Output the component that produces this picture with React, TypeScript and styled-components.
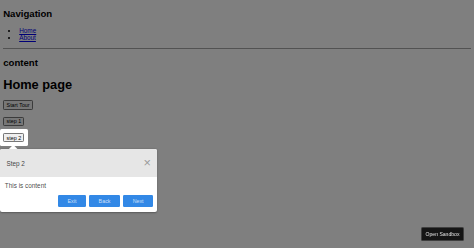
import {ReactElement} from "react";
import styled, {createGlobalStyle} from "styled-components";

// Global
const GlobalStyle = createGlobalStyle`
  html, body {
    margin: 0;
    height: 100%;
    overflow: hidden;
  }

  body {
    background: #fff;
    font-family: "Liberation Sans", Arial, sans-serif;
  }
`

// Page
const Page = styled.div`
  display: flow-root;
  position: relative;
  padding: 0 3.2px;
  min-height: 248px;
  box-sizing: border-box;
`

const SectionTitle = styled.h2`
  margin: 8px 0;
  font-size: 9.6px;
  font-weight: bold;
  line-height: normal;
`

const PageTitle = styled.h1`
  margin: 8.6px 0;
  font-size: 12.8px;
  font-weight: bold;
  line-height: normal;
`

const NavList = styled.ul`
  margin: 6.4px 0;
  padding-left: 16px;
  font-size: 6.4px;
  line-height: 7.4px;
`

const NavLink = styled.a`
  color: #0000ee;
  text-decoration: underline;
`

const Divider = styled.hr`
  margin: 3.2px 0;
  border: 0;
  border-top: 1px solid #a4a4a4;
`

const TourButtons = styled.div`
  display: flex;
  flex-direction: column;
  align-items: flex-start;
  gap: 6.6px;
`

const PlainButton = styled.button`
  margin: 0;
  padding: 0.8px 2.4px;
  font-family: "Liberation Sans", Arial, sans-serif;
  font-size: 5.33px;
  line-height: normal;
  color: #000;
  background: #efefef;
  border: 1px solid #767676;
  border-radius: 1.2px;
`

// Tour
const Target = styled.div`
  position: relative;
  display: inline-flex;
`

const Spotlight = styled.div`
  position: absolute;
  inset: -3.6px -3.2px -3.2px -3.2px;
  border-radius: 1.6px;
  box-shadow: 0 0 0 2000px rgba(0, 0, 0, 0.5);
  pointer-events: none;
  z-index: 5;
`

const Popover = styled.div`
  position: absolute;
  top: calc(100% + 6.8px);
  left: -3.2px;
  width: 157.4px;
  background: #fff;
  border-radius: 2px;
  box-shadow: 0 0.4px 1.8px rgba(0, 0, 0, 0.3);
  z-index: 10;
`

const Arrow = styled.div`
  position: absolute;
  top: -3.2px;
  left: 10.2px;
  width: 6.4px;
  height: 6.4px;
  background: #fff;
  transform: rotate(45deg);
`

const PopoverHeader = styled.div`
  position: relative;
  display: flex;
  align-items: center;
  height: 27.7px;
  padding: 0 6.4px;
  background: #e6e6e6;
  border-radius: 2px 2px 0 0;
`

const PopoverTitle = styled.h3`
  flex: 1 0 auto;
  margin: 0;
  font-size: 6.4px;
  font-weight: 400;
  color: rgba(0, 0, 0, 0.75);
`

const CloseButton = styled.button`
  margin: 0;
  padding: 0;
  background: transparent;
  border: 0;
  font-family: "Liberation Sans", Arial, sans-serif;
  font-size: 12.8px;
  line-height: 1;
  color: rgba(128, 128, 128, 0.75);
`

const PopoverText = styled.div`
  padding: 4.8px;
  font-size: 6.4px;
  line-height: 1.3em;
  color: rgba(0, 0, 0, 0.75);
`

const PopoverFooter = styled.div`
  display: flex;
  justify-content: flex-end;
  gap: 3.4px;
  padding: 0 4.4px 4.8px;
`

const TourButton = styled.button`
  margin: 0;
  padding: 3.2px 9.4px;
  font-family: "Liberation Sans", Arial, sans-serif;
  font-size: 5.33px;
  font-weight: 500;
  line-height: normal;
  color: rgba(255, 255, 255, 0.75);
  background: #3288e6;
  border: 0;
  border-radius: 1.2px;
`

// Sandbox badge
const SandboxLink = styled.a`
  position: fixed;
  right: 9.7px;
  bottom: 7.3px;
  display: flex;
  align-items: center;
  justify-content: center;
  width: 43.6px;
  height: 13.4px;
  box-sizing: border-box;
  font-size: 5.1px;
  color: #e2e2e2;
  background: #151515;
  border: 0.6px solid rgba(255, 255, 255, 0.18);
  border-radius: 1.6px;
  text-decoration: none;
  z-index: 20;
`

const App = (): ReactElement => (
    <>
        <GlobalStyle/>
        <Page>
            <nav>
                <SectionTitle>Navigation</SectionTitle>
                <NavList>
                    <li><NavLink href="#">Home</NavLink></li>
                    <li><NavLink href="#">About</NavLink></li>
                </NavList>
            </nav>
            <Divider/>
            <main>
                <SectionTitle>content</SectionTitle>
                <PageTitle>Home page</PageTitle>
                <TourButtons>
                    <PlainButton>Start Tour</PlainButton>
                    <PlainButton>step 1</PlainButton>
                    <Target>
                        <PlainButton>step 2</PlainButton>
                        <Spotlight/>
                        <Popover>
                            <Arrow/>
                            <PopoverHeader>
                                <PopoverTitle>Step 2</PopoverTitle>
                                <CloseButton aria-label="Close Tour">×</CloseButton>
                            </PopoverHeader>
                            <PopoverText>This is content</PopoverText>
                            <PopoverFooter>
                                <TourButton>Exit</TourButton>
                                <TourButton>Back</TourButton>
                                <TourButton>Next</TourButton>
                            </PopoverFooter>
                        </Popover>
                    </Target>
                </TourButtons>
            </main>
        </Page>
        <SandboxLink href="#">Open Sandbox</SandboxLink>
    </>
)

export default App
